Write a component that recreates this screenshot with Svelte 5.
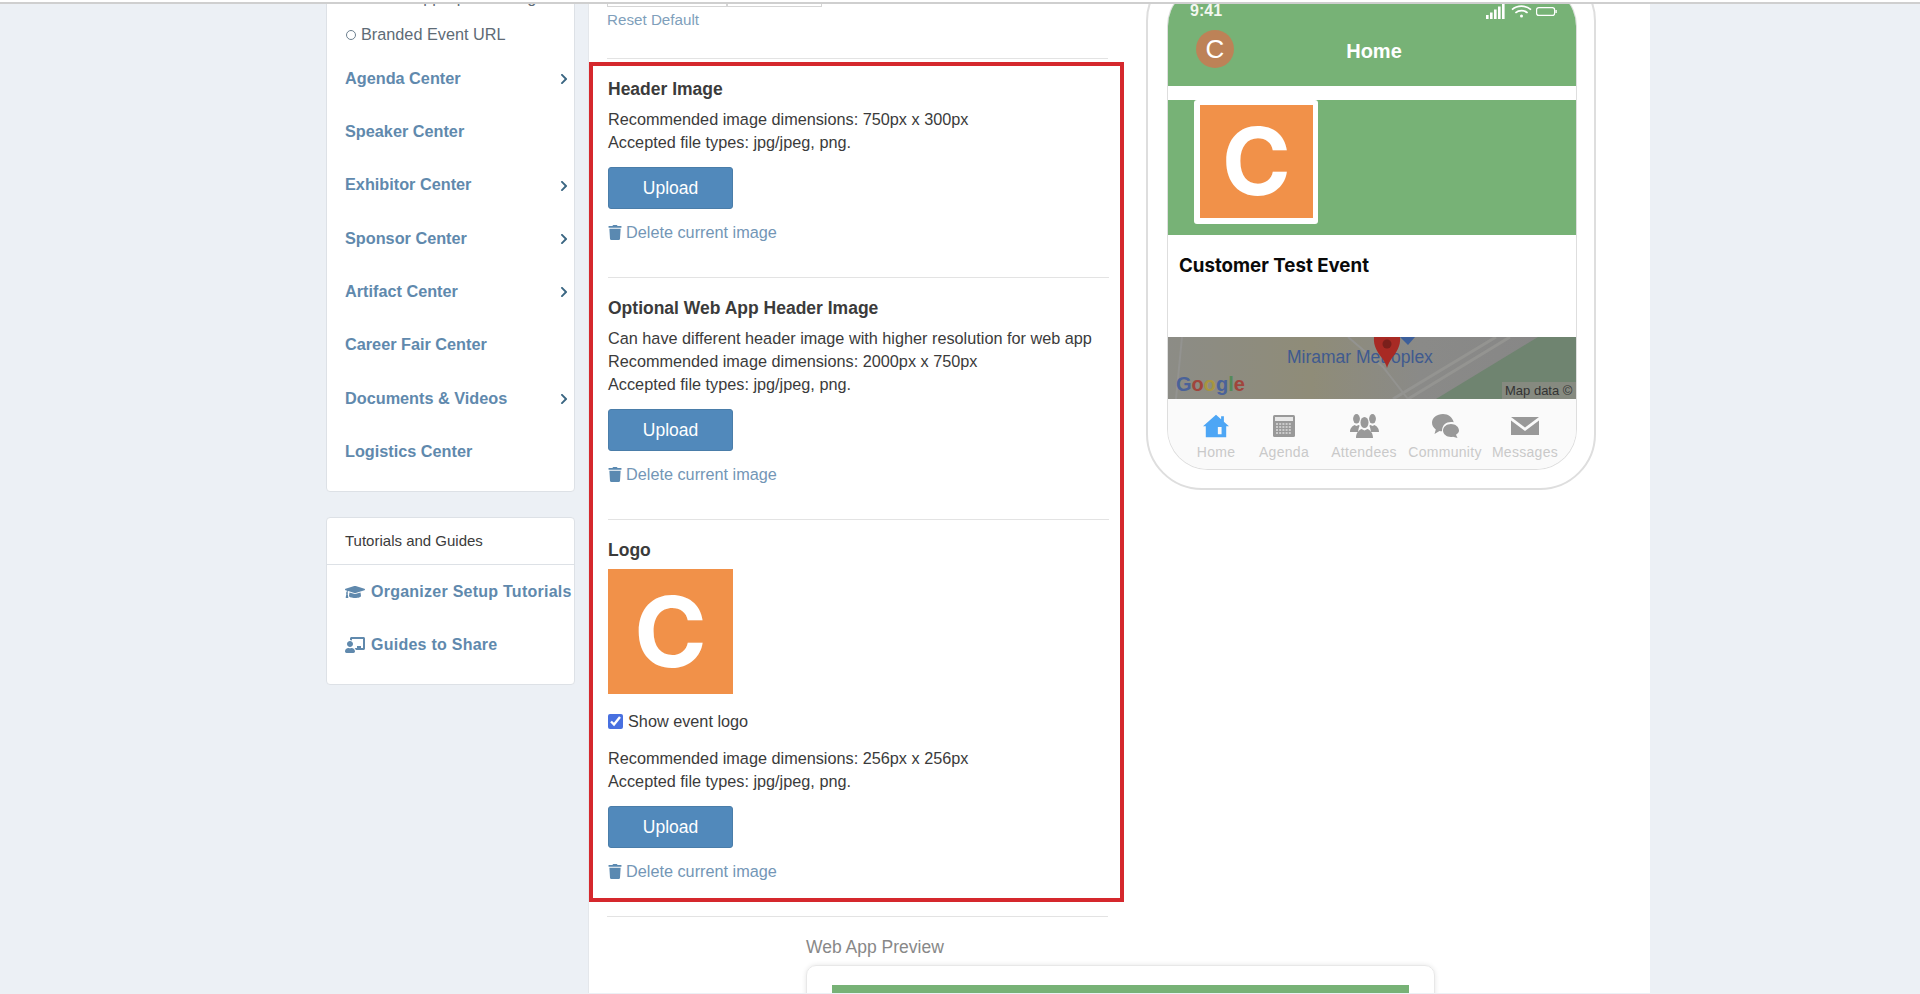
<script>
  const navItems = [
    { label: 'Agenda Center', chevron: true },
    { label: 'Speaker Center', chevron: false },
    { label: 'Exhibitor Center', chevron: true },
    { label: 'Sponsor Center', chevron: true },
    { label: 'Artifact Center', chevron: true },
    { label: 'Career Fair Center', chevron: false },
    { label: 'Documents & Videos', chevron: true },
    { label: 'Logistics Center', chevron: false },
  ];

  const trash =
    'M432 32H312l-9.4-18.7A24 24 0 0 0 281.1 0H166.8a23.72 23.72 0 0 0-21.4 13.3L136 32H16A16 16 0 0 0 0 48v32a16 16 0 0 0 16 16h416a16 16 0 0 0 16-16V48a16 16 0 0 0-16-16zM53.2 467a48 48 0 0 0 47.9 45h245.8a48 48 0 0 0 47.9-45L416 128H32z';
  const chevron =
    'M285.476 272.971L91.132 467.314c-9.373 9.373-24.569 9.373-33.941 0l-22.667-22.667c-9.357-9.357-9.375-24.522-.04-33.901L188.505 256 34.484 101.255c-9.335-9.379-9.317-24.544.04-33.901l22.667-22.667c9.373-9.373 24.569-9.373 33.941 0L285.475 239.03c9.373 9.372 9.373 24.568.001 33.941z';
</script>

{#snippet deleteLink()}
  <div class="delete">
    <svg class="trash" viewBox="0 0 448 512"><path d={trash} /></svg>
    <span>Delete current image</span>
  </div>
{/snippet}

<div class="topbar"></div>

<div class="shell">
  <aside class="side">
    <div class="card nav-card">
      <div class="sub-row scrolled"><span class="ring"></span>Mobile App Splash Image</div>
      <div class="sub-row"><span class="ring"></span>Branded Event URL</div>
      {#each navItems as item (item.label)}
        <div class="nav-row">
          <span>{item.label}</span>
          {#if item.chevron}
            <svg class="chevron" viewBox="0 0 320 512"><path d={chevron} /></svg>
          {/if}
        </div>
      {/each}
    </div>

    <div class="card guide-card">
      <div class="guide-head">Tutorials and Guides</div>
      <div class="nav-row guide-row">
        <svg class="guide-icon" viewBox="0 0 640 512"
          ><path
            d="M622.34 153.2L343.4 67.5c-15.2-4.67-31.6-4.67-46.79 0L17.66 153.2c-23.54 7.23-23.54 38.36 0 45.59l48.63 14.94c-10.67 13.19-17.23 29.28-17.88 46.9C38.78 266.15 32 276.11 32 288c0 10.78 5.68 19.85 13.86 25.65L20.33 428.53C18.11 438.52 25.71 448 35.94 448h56.11c10.24 0 17.84-9.48 15.62-19.47L82.14 313.65C90.32 307.85 96 298.78 96 288c0-11.57-6.47-21.25-15.66-26.87.76-15.02 8.44-28.3 20.69-36.72L296.6 284.5c9.06 2.78 26.44 6.25 46.79 0l278.95-85.7c23.55-7.24 23.55-38.36 0-45.6zM352.79 315.09c-28.53 8.76-52.84 3.92-65.59 0l-145.02-44.55L128 384c0 35.35 85.96 64 192 64s192-28.65 192-64l-14.18-113.47-145.03 44.56z"
          /></svg
        >
        <span class="guide-label">Organizer Setup Tutorials</span>
      </div>
      <div class="nav-row guide-row">
        <svg class="guide-icon" viewBox="0 0 640 512"
          ><path
            d="M208 352c-2.39 0-4.78.35-7.06 1.09C187.98 357.3 174.35 360 160 360c-14.35 0-27.98-2.7-40.95-6.91-2.28-.74-4.66-1.09-7.05-1.09C49.94 352-.33 402.48 0 464.62.14 490.88 21.73 512 48 512h224c26.27 0 47.86-21.12 48-47.38.33-62.14-49.94-112.62-112-112.62zm-48-32c53.02 0 96-42.98 96-96s-42.98-96-96-96-96 42.98-96 96 42.98 96 96 96zM592 0H208c-26.47 0-48 22.25-48 49.59V96c23.42 0 45.1 6.78 64 17.8V64h352v288h-64v-64H384v64h-76.24c19.1 16.69 33.12 38.73 39.69 64H592c26.47 0 48-22.25 48-49.59V49.59C640 22.25 618.47 0 592 0z"
          /></svg
        >
        <span class="guide-label">Guides to Share</span>
      </div>
    </div>
  </aside>

  <main class="main">
    <div class="columns">
      <div class="form-col">
        <div class="inputs"><div class="box one"></div><div class="box two"></div></div>
        <div class="reset">Reset Default</div>
        <hr class="rule top-rule" />

        <section class="outlined">
          <h3>Header Image</h3>
          <p>Recommended image dimensions: 750px x 300px<br />Accepted file types: jpg/jpeg, png.</p>
          <button class="upload">Upload</button>
          {@render deleteLink()}
          <hr class="rule inner-rule" />

          <h3>Optional Web App Header Image</h3>
          <p>
            Can have different header image with higher resolution for web app<br />Recommended image
            dimensions: 2000px x 750px<br />Accepted file types: jpg/jpeg, png.
          </p>
          <button class="upload">Upload</button>
          {@render deleteLink()}
          <hr class="rule inner-rule" />

          <h3>Logo</h3>
          <div class="logo big-logo">C</div>
          <label class="show-logo"><input type="checkbox" checked />Show event logo</label>
          <p>Recommended image dimensions: 256px x 256px<br />Accepted file types: jpg/jpeg, png.</p>
          <button class="upload">Upload</button>
          {@render deleteLink()}
        </section>
      </div>

      <div class="phone">
        <div class="screen">
          <div class="app-head">
            <div class="status">
              <span>9:41</span>
              <div class="status-icons">
                <svg width="21" height="16" viewBox="0 0 21 16" fill="#fff">
                  <rect x="0" y="12" width="2.6" height="4" />
                  <rect x="4" y="9.5" width="2.6" height="6.5" />
                  <rect x="8" y="6.5" width="2.6" height="9.5" />
                  <rect x="12" y="3.5" width="2.6" height="12.5" />
                  <rect x="16" y="0" width="2.6" height="16" />
                </svg>
                <svg width="21" height="13" viewBox="0 0 21 13" fill="none" stroke="#fff" stroke-width="1.7">
                  <path d="M1 4.6c5.4-4.6 13.6-4.6 19 0" />
                  <path d="M4.4 7.8c3.5-2.8 8.7-2.8 12.2 0" />
                  <circle cx="10.5" cy="11" r="1.5" fill="#fff" stroke="none" />
                </svg>
                <svg width="21" height="9" viewBox="0 0 21 9" fill="none">
                  <rect x=".6" y=".6" width="18" height="7.8" rx="2.2" stroke="#fff" stroke-width="1.2" />
                  <rect x="19.4" y="3" width="1.4" height="3" fill="#fff" />
                </svg>
              </div>
            </div>
            <div class="app-nav">
              <div class="avatar">C</div>
              <div class="app-title">Home</div>
            </div>
          </div>

          <div class="hero">
            <div class="hero-frame"><div class="logo small-logo">C</div></div>
          </div>

          <div class="info">Customer Test Event</div>

          <svg class="map" width="408" height="62" viewBox="0 0 408 62">
            <defs>
              <linearGradient id="land" x1="0" x2="1" y1="0" y2="0">
                <stop offset="0" stop-color="#8c8c86" />
                <stop offset="0.35" stop-color="#8f8c78" />
                <stop offset="0.62" stop-color="#8a8a88" />
                <stop offset="1" stop-color="#868686" />
              </linearGradient>
            </defs>
            <rect width="408" height="62" fill="url(#land)" />
            <path d="M268 62 L370 0 L408 0 L408 62 Z" fill="#6f8470" />
            <path d="M225 62 L328 0 M240 62 L342 0" stroke="#949491" stroke-width="3" fill="none" />
            <path d="M180 0 L215 30 L240 62 M14 0 L8 62" stroke="#939390" stroke-width="2" fill="none" />
            <text x="119" y="26" class="map-place">Miramar Metroplex</text>
            <path d="M232 0 L247 0 L240 8 Z" fill="#3d5f9a" />
            <path
              d="M206 0 L232 0 C233 9 228 16 224 21 C222 24 220 27 219 31 C218 27 216 24 214 21 C210 16 205 9 206 0 Z"
              fill="#a82a24"
            />
            <circle cx="219" cy="7" r="4.5" fill="#7a1f1b" />
            <text x="8" y="54" class="map-google"
              ><tspan fill="#4a6299">G</tspan><tspan fill="#a0453c">o</tspan><tspan fill="#a89640">o</tspan><tspan
                fill="#4a6299">g</tspan
              ><tspan fill="#558a58">l</tspan><tspan fill="#a0453c">e</tspan></text
            >
            <rect x="334" y="45" width="74" height="17" fill="#868a80" />
            <text x="337" y="58" class="map-data">Map data ©</text>
          </svg>

          <div class="tabs">
            <div class="tab">
              <svg class="tab-icon" width="26" height="24" viewBox="0 0 28 24">
                <path
                  fill="#4da6f5"
                  fill-rule="evenodd"
                  d="M14 0 L19.5 4.8 L19.5 1.5 L22.5 1.5 L22.5 7.4 L28 12.2 L25 12.2 L25 24 L3 24 L3 12.2 L0 12.2 Z M16 13 L16 21 L20 21 L20 13 Z"
                />
              </svg>
              <span>Home</span>
            </div>
            <div class="tab">
              <svg class="tab-icon" width="22" height="24" viewBox="0 0 22 24">
                <rect width="22" height="22" y="1" rx="1.5" fill="#999" />
                <rect x="2" y="3" width="18" height="4" fill="#e8e8e8" />
                <path
                  d="M3 10h16M3 13h16M3 16h16M3 19h16"
                  stroke="#dcdcdc"
                  stroke-width="1.3"
                  stroke-dasharray="2 1.2"
                />
              </svg>
              <span>Agenda</span>
            </div>
            <div class="tab">
              <svg class="tab-icon" width="29" height="24" viewBox="0 0 29 24" fill="#999">
                <ellipse cx="6.500" cy="4.800" rx="3.400" ry="4.800" />
                <ellipse cx="22.500" cy="4.800" rx="3.400" ry="4.800" />
                <path d="M0 18c0-4 2.500-6 4.500-7l2 1 2-1c.4.200.8.400 1.100.7C8.500 14 8.500 16 8 18z" />
                <path d="M29 18c0-4-2.500-6-4.500-7l-2 1-2-1c-.4.200-.8.400-1.100.7 1.100 2.300 1.100 4.300 1.600 6.300z" />
                <ellipse cx="14.500" cy="8.500" rx="4" ry="5.500" />
                <path d="M6 24c0-5 2.500-7.500 5.500-9l3 1.500 3-1.500c3 1.500 5.500 4 5.500 9z" />
              </svg>
              <span>Attendees</span>
            </div>
            <div class="tab">
              <svg class="tab-icon" width="27" height="24" viewBox="0 0 27 24" fill="#999">
                <path d="M11 0C4.900 0 0 3.900 0 8.800c0 2.700 1.500 5.100 3.800 6.700L2.500 20l5-3c.8.200 1.600.3 2.500.3C10 11 14 8 19 8c1 0 1.800.100 2.700.3C20.600 3.500 16.300 0 11 0z" />
                <path d="M19 10c-4.400 0-8 2.900-8 6.500s3.600 6.500 8 6.500c.7 0 1.400-.1 2-.2l4.500 1.200-1.500-3.200c1.900-1.200 3-2.800 3-4.300 0-3.600-3.600-6.500-8-6.500z" />
              </svg>
              <span>Community</span>
            </div>
            <div class="tab">
              <svg class="tab-icon" width="28" height="24" viewBox="0 0 28 24" fill="#999">
                <path d="M0 3h28L14 13.500z" />
                <path d="M0 6.500 L14 17 L28 6.500 V21 H0z" />
              </svg>
              <span>Messages</span>
            </div>
          </div>
        </div>
      </div>
    </div>

    <hr class="rule bottom-rule" />
    <div class="preview-label">Web App Preview</div>
    <div class="preview-card"><div class="preview-green"></div></div>
  </main>
</div>

<style>
  :global(body) {
    margin: 0;
    background: #ecf0f5;
    font-family: 'Liberation Sans', Arial, sans-serif;
    color: #3b3b3b;
    overflow: hidden;
  }

  .topbar {
    position: relative;
    z-index: 1;
    height: 2px;
    border-top: 2px solid #fff;
    background: #cfcfcf;
  }

  .shell {
    height: 990px;
    margin: -1px 270px 0 326px;
    display: flex;
    gap: 13px;
    overflow: hidden;
  }

  .side {
    width: 249px;
    flex: none;
  }

  .card {
    background: #fff;
    border: 1px solid #dde1e6;
    border-radius: 4px;
    box-sizing: border-box;
  }

  .nav-card {
    margin-top: -20.5px;
    padding: 0 0 13px;
  }

  .sub-row {
    height: 34px;
    box-sizing: border-box;
    display: flex;
    align-items: center;
    gap: 5px;
    padding-left: 19px;
    font-size: 16.25px;
    color: #5e6b76;
  }

  .scrolled {
    padding-bottom: 6px;
  }

  .ring {
    width: 8px;
    height: 8px;
    border: 1.5px solid #6c7f8f;
    border-radius: 50%;
  }

  .nav-row {
    height: 53.33px;
    display: flex;
    align-items: center;
    justify-content: space-between;
    padding: 0 5px 0 18px;
    font-size: 16.25px;
    font-weight: 700;
    color: #6089ad;
  }

  .chevron {
    width: 10px;
    height: 12px;
    fill: #3a6682;
    margin-top: 2px;
  }

  .guide-card {
    margin-top: 25px;
    height: 168px;
  }

  .guide-head {
    height: 46px;
    line-height: 46px;
    padding-left: 18px;
    font-size: 15px;
    border-bottom: 1px solid #dde1e6;
  }

  .guide-row {
    height: 53px;
    justify-content: flex-start;
    gap: 6px;
    padding-right: 0;
    font-size: 16px;
  }

  .guide-icon {
    width: 20px;
    height: 16px;
    fill: #6089ad;
  }

  .guide-label {
    white-space: nowrap;
    letter-spacing: 0.25px;
  }

  .main {
    flex: 1;
    background: #fff;
    border-left: 1px solid #e4e7eb;
    min-width: 0;
  }

  .columns {
    display: flex;
    align-items: flex-start;
  }

  .form-col {
    width: 535px;
    flex: none;
  }

  .inputs {
    display: flex;
    margin-left: 18px;
    height: 4px;
  }

  .box {
    border: 1px solid #d5d5d5;
    border-top: none;
  }

  .one {
    width: 118px;
  }

  .two {
    width: 93px;
  }

  .reset {
    margin: 4px 0 0 18px;
    font-size: 15.2px;
    line-height: 18px;
    color: #7f9fbb;
  }

  .rule {
    border: none;
    height: 1px;
    background: #e3e3e3;
    margin: 0;
  }

  .top-rule {
    margin: 29px 16px 0 18px;
  }

  .outlined {
    margin-top: 3px;
    border: 4px solid #d5282d;
    padding: 12px 11px 15px 15px;
    box-sizing: border-box;
  }

  h3 {
    margin: 0 0 7px;
    font-size: 17.5px;
    line-height: 23px;
    font-weight: 700;
  }

  p {
    margin: 0;
    font-size: 16.25px;
    line-height: 23px;
  }

  .upload {
    display: block;
    width: 125px;
    height: 42px;
    margin-top: 13px;
    padding: 0;
    background: #5189bb;
    border: 1px solid #4a7da9;
    border-radius: 3px;
    color: #fff;
    font: 17.5px 'Liberation Sans', Arial, sans-serif;
  }

  .delete {
    display: flex;
    align-items: center;
    gap: 4px;
    margin-top: 12px;
    height: 23px;
    font-size: 16.25px;
    color: #7396b6;
  }

  .trash {
    width: 14px;
    height: 15px;
    fill: #5a89b1;
  }

  .inner-rule {
    margin: 33px 0 19px;
  }

  .logo {
    background: #f19149;
    color: #fff;
    display: flex;
    align-items: center;
    justify-content: center;
    font-family: Inter, sans-serif;
    font-weight: 700;
  }

  .big-logo {
    width: 125px;
    height: 125px;
    font-size: 98px;
    line-height: 1;
  }

  .show-logo {
    display: flex;
    align-items: center;
    gap: 5px;
    height: 23px;
    margin: 16px 0 14px;
    font-size: 16.25px;
  }

  .show-logo input {
    width: 15px;
    height: 15px;
    margin: 0;
    accent-color: #4870e0;
  }

  .phone {
    width: 450px;
    height: 525px;
    flex: none;
    margin: -38px 0 0 22px;
    padding: 19px 18px 19px 20px;
    box-sizing: border-box;
    border: 2px solid #dedede;
    border-radius: 56px;
  }

  .screen {
    height: 483px;
    border-radius: 40px;
    overflow: hidden;
    position: relative;
    box-shadow: 0 0 0 1px #dedede;
  }

  .app-head {
    height: 100px;
    background: #77b276;
    color: #fff;
    box-sizing: border-box;
    padding-top: 15px;
  }

  .status {
    height: 20px;
    display: flex;
    justify-content: space-between;
    align-items: center;
    padding: 0 19px 0 22px;
    font-size: 16px;
    font-weight: 700;
    color: #f2f7f0;
  }

  .status-icons {
    display: flex;
    align-items: center;
    gap: 4px;
  }

  .app-nav {
    height: 38px;
    margin-top: 9px;
    padding: 0 24px 0 28px;
    display: grid;
    grid-template-columns: 1fr auto 1fr;
    align-items: center;
  }

  .avatar {
    width: 38px;
    height: 38px;
    border-radius: 50%;
    background: #bd8257;
    display: flex;
    align-items: center;
    justify-content: center;
    font-size: 26px;
  }

  .app-title {
    font-size: 20px;
    font-weight: 700;
    padding-top: 5px;
  }

  .hero {
    margin-top: 14px;
    height: 135px;
    background: #77b276;
    padding-left: 26px;
  }

  .hero-frame {
    width: 124px;
    height: 124px;
    box-sizing: border-box;
    padding: 5px 5px 5px 6px;
    background: #fff;
    border-radius: 3px;
  }

  .small-logo {
    height: 113px;
    font-size: 93px;
    line-height: 1;
  }

  .info {
    height: 102px;
    box-sizing: border-box;
    padding: 19px 0 0 11px;
    font-family: Inter, sans-serif;
    font-size: 18.7px;
    line-height: 24px;
    font-weight: 700;
    color: #0a0a0a;
  }

  .map {
    display: block;
  }

  .map-place {
    font: 17.5px 'Liberation Sans', Arial, sans-serif;
    fill: #3f5a8f;
  }

  .map-google {
    font: 700 20px 'Liberation Sans', Arial, sans-serif;
  }

  .map-data {
    font: 13px 'Liberation Sans', Arial, sans-serif;
    fill: #333;
  }

  .tabs {
    height: 70px;
    background: #fafafa;
    display: grid;
    grid-template-columns: 68px 68px 92px 70px 90px;
    padding-left: 14px;
    padding-top: 15px;
    box-sizing: border-box;
  }

  .tab {
    display: flex;
    flex-direction: column;
    align-items: center;
    gap: 6px;
    font-size: 14px;
    line-height: 16px;
    letter-spacing: 0.3px;
    color: #c9c9c9;
    white-space: nowrap;
  }

  .bottom-rule {
    margin: 14px 0 0 18px;
    width: 501px;
  }

  .preview-label {
    margin: 20px 0 0 217px;
    font-size: 17.5px;
    line-height: 20px;
    color: #888;
  }

  .preview-card {
    margin: 8px 0 0 217px;
    width: 629px;
    height: 300px;
    box-sizing: border-box;
    border: 1px solid #e8e8e8;
    border-radius: 10px;
    box-shadow: 0 0 5px rgba(0, 0, 0, 0.1);
    padding: 19px 25px;
  }

  .preview-green {
    height: 100%;
    background: #77b276;
  }
</style>
